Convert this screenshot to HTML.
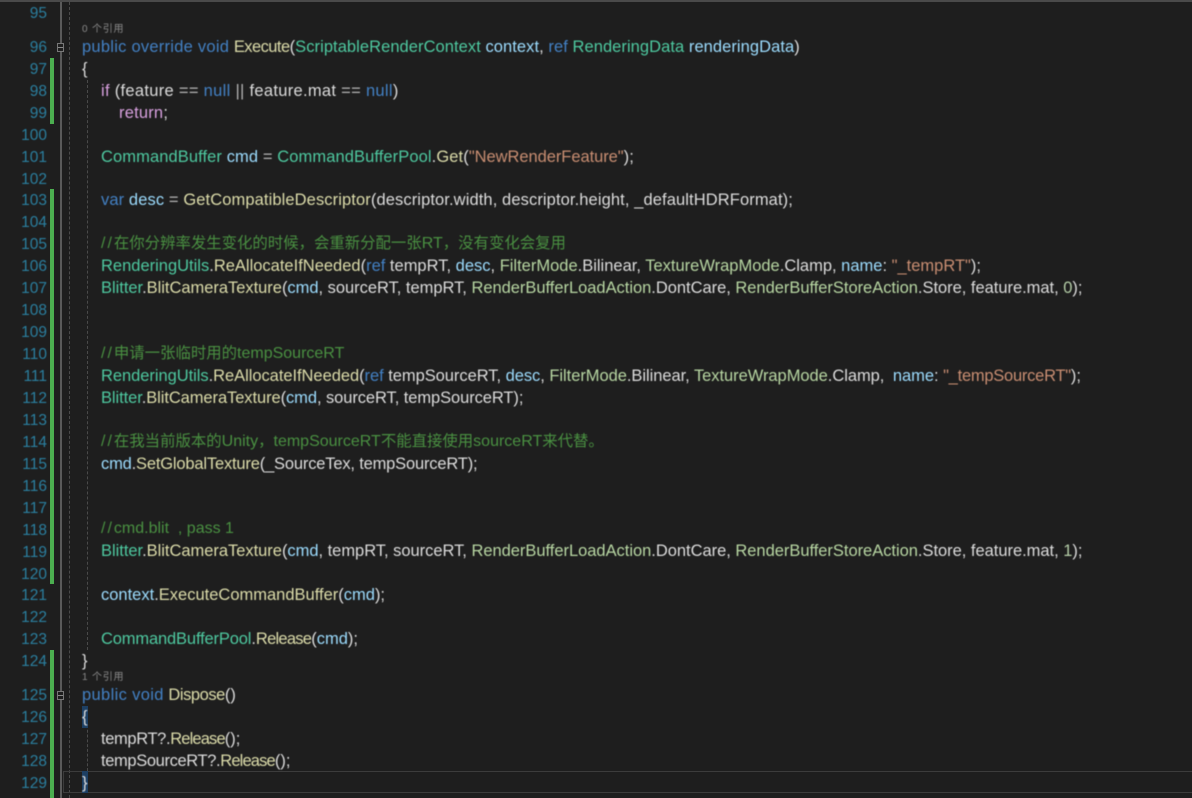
<!DOCTYPE html>
<html lang="zh">
<head>
<meta charset="utf-8">
<style>
html,body{margin:0;padding:0;background:#1e1e1e;}
#r{position:relative;width:1192px;height:798px;overflow:hidden;background:#1e1e1e;font-family:"Liberation Sans","Noto Sans CJK SC",sans-serif;font-size:16.5px;color:#dcdcdc;}
#t{position:absolute;inset:0;filter:blur(.42px);}
.l{position:absolute;white-space:pre;line-height:22px;height:22px;left:82px;}
.i{left:101px}
.n{position:absolute;left:0;width:47px;text-align:right;color:#2b7f9f;line-height:22px;height:22px;font-size:15.5px;}
.c{position:absolute;left:82px;font-size:10px;color:#8a8a8a;line-height:12px;letter-spacing:.8px;white-space:pre}
.k{color:#4381c4}.t{color:#4ec9a0}.m{color:#dcdcaa}.p{color:#9cdcfe}.g{color:#4a9142;font-size:15.4px}.s{color:#c98e72}.f{color:#d8a0df}.o{color:#b4b4b4}.d{color:#b5cea8}.e{color:#b8d7a3}
.g b{font-weight:normal;font-size:16px}
.g i{font-style:normal;font-size:16px;letter-spacing:2px}
.b{position:absolute}
</style>
</head>
<body>
<div id="r">
<div class="b" style="left:0;top:0;width:1192px;height:2px;background:#4a4a4a"></div>
<div class="b" style="left:60px;top:2px;width:2px;height:796px;background:#5a5a5a"></div>
<div class="b" style="left:69px;top:2px;height:796px;border-left:1px dashed #4a4a4a"></div>
<div class="b" style="left:87px;top:80px;height:570px;border-left:1px dashed #4a4a4a"></div>
<div class="b" style="left:87px;top:725px;height:46px;border-left:1px dashed #4a4a4a"></div>
<div class="b" style="left:50px;top:58px;width:4px;height:66px;background:#4caf50"></div>
<div class="b" style="left:50px;top:189px;width:4px;height:395px;background:#4caf50"></div>
<div class="b" style="left:50px;top:650px;width:4px;height:148px;background:#4caf50"></div>
<div class="b" style="left:57px;top:43px;width:5px;height:7px;border:1px solid #777;background:#1e1e1e"></div>
<div class="b" style="left:58px;top:47px;width:5px;height:1px;background:#888"></div>
<div class="b" style="left:57px;top:691px;width:5px;height:7px;border:1px solid #777;background:#1e1e1e"></div>
<div class="b" style="left:58px;top:695px;width:5px;height:1px;background:#888"></div>
<div class="b" style="left:63px;top:771px;width:1129px;height:20px;border:1px solid #3c3c3c;border-right:none"></div>
<div class="b" style="left:82px;top:706px;width:6px;height:22px;background:#1d3f63"></div>
<div class="b" style="left:82px;top:771px;width:6px;height:22px;background:#1d3f63"></div>
<div id="t">
<div class="n" style="top:3px">95</div>
<div class="n" style="top:37px">96</div>
<div class="n" style="top:59px">97</div>
<div class="n" style="top:81px">98</div>
<div class="n" style="top:103px">99</div>
<div class="n" style="top:125px">100</div>
<div class="n" style="top:147px">101</div>
<div class="n" style="top:169px">102</div>
<div class="n" style="top:190px">103</div>
<div class="n" style="top:212px">104</div>
<div class="n" style="top:234px">105</div>
<div class="n" style="top:256px">106</div>
<div class="n" style="top:278px">107</div>
<div class="n" style="top:300px">108</div>
<div class="n" style="top:322px">109</div>
<div class="n" style="top:344px">110</div>
<div class="n" style="top:366px">111</div>
<div class="n" style="top:388px">112</div>
<div class="n" style="top:410px">113</div>
<div class="n" style="top:432px">114</div>
<div class="n" style="top:454px">115</div>
<div class="n" style="top:476px">116</div>
<div class="n" style="top:498px">117</div>
<div class="n" style="top:520px">118</div>
<div class="n" style="top:542px">119</div>
<div class="n" style="top:564px">120</div>
<div class="n" style="top:585px">121</div>
<div class="n" style="top:607px">122</div>
<div class="n" style="top:629px">123</div>
<div class="n" style="top:651px">124</div>
<div class="n" style="top:685px">125</div>
<div class="n" style="top:707px">126</div>
<div class="n" style="top:729px">127</div>
<div class="n" style="top:751px">128</div>
<div class="n" style="top:773px">129</div>

<div class="c" style="top:24px">0 个引用</div>
<div class="l" style="top:36px;letter-spacing:.057px"><span class="k" style="letter-spacing:.25px">public override void</span> <span class="m" style="letter-spacing:-.55px">Execute</span>(<span class="t">ScriptableRenderContext</span> <span class="p">context</span>, <span class="k">ref</span> <span class="t">RenderingData</span> <span class="p">renderingData</span>)</div>
<div class="l" style="top:58px">{</div>
<div class="l i" style="top:80px;letter-spacing:.3px"><span class="f">if</span> (feature <span class="o">==</span> <span class="k">null</span> <span class="o">||</span> feature.mat <span class="o">==</span> <span class="k">null</span>)</div>
<div class="l" style="top:102px;left:119px;letter-spacing:.2px"><span class="f">return</span>;</div>
<div class="l i" style="top:146px;letter-spacing:.09px"><span class="t">CommandBuffer</span> <span class="p">cmd</span> <span class="o">=</span> <span class="t">CommandBufferPool</span>.<span class="m">Get</span>(<span class="s" style="letter-spacing:-.05px">"NewRenderFeature"</span>);</div>
<div class="l i" style="top:189px;letter-spacing:.1px"><span class="k">var</span> <span class="p">desc</span> <span class="o">=</span> <span class="m">GetCompatibleDescriptor</span>(descriptor.width, descriptor.height, _defaultHDRFormat);</div>
<div class="l i g" style="top:233px"><i>//</i>在你分辨率发生变化的时候，会重新分配一张<b>RT</b>，没有变化会复用</div>
<div class="l i" style="top:255px"><span class="t">RenderingUtils</span>.<span class="m">ReAllocateIfNeeded</span>(<span class="k">ref</span> tempRT, <span class="p">desc</span>, <span class="e">FilterMode</span>.Bilinear, <span class="e">TextureWrapMode</span>.Clamp, <span class="p">name</span>: <span class="s">"_tempRT"</span>);</div>
<div class="l i" style="top:277px;letter-spacing:-.026px"><span class="t">Blitter</span>.<span class="m">BlitCameraTexture</span>(<span class="p">cmd</span>, sourceRT, tempRT, <span class="e">RenderBufferLoadAction</span>.DontCare, <span class="e">RenderBufferStoreAction</span>.Store, feature.mat, <span class="d">0</span>);</div>
<div class="l i g" style="top:343px"><i>//</i>申请一张临时用的<b>tempSourceRT</b></div>
<div class="l i" style="top:365px;letter-spacing:-.045px"><span class="t">RenderingUtils</span>.<span class="m">ReAllocateIfNeeded</span>(<span class="k">ref</span> tempSourceRT, <span class="p">desc</span>, <span class="e">FilterMode</span>.Bilinear, <span class="e">TextureWrapMode</span>.Clamp, <span class="p" style="margin-left:4px">name</span>: <span class="s" style="letter-spacing:-.25px">"_tempSourceRT"</span>);</div>
<div class="l i" style="top:387px;letter-spacing:-.08px"><span class="t">Blitter</span>.<span class="m">BlitCameraTexture</span>(<span class="p">cmd</span>, sourceRT, tempSourceRT);</div>
<div class="l i g" style="top:431px"><i>//</i>在我当前版本的<b>Unity</b>，<b>tempSourceRT</b>不能直接使用<b>sourceRT</b>来代替。</div>
<div class="l i" style="top:453px;letter-spacing:-.18px"><span class="p">cmd</span>.<span class="m">SetGlobalTexture</span>(_SourceTex, tempSourceRT);</div>
<div class="l i g" style="top:518px;font-size:16px"><i>//</i>cmd.blit  , pass 1</div>
<div class="l i" style="top:540px;letter-spacing:-.026px"><span class="t">Blitter</span>.<span class="m">BlitCameraTexture</span>(<span class="p">cmd</span>, tempRT, sourceRT, <span class="e">RenderBufferLoadAction</span>.DontCare, <span class="e">RenderBufferStoreAction</span>.Store, feature.mat, <span class="d">1</span>);</div>
<div class="l i" style="top:584px"><span class="p">context</span>.<span class="m">ExecuteCommandBuffer</span>(<span class="p">cmd</span>);</div>
<div class="l i" style="top:628px"><span class="t" style="letter-spacing:-.15px">CommandBufferPool</span>.<span class="m" style="letter-spacing:-.75px">Release</span>(<span class="p">cmd</span>);</div>
<div class="l" style="top:650px">}</div>
<div class="c" style="top:672px">1 个引用</div>
<div class="l" style="top:684px"><span class="k" style="letter-spacing:.35px">public void</span> <span class="m" style="letter-spacing:-.45px">Dispose</span>()</div>
<div class="l" style="top:706px">{</div>
<div class="l i" style="top:728px"><span style="letter-spacing:-.37px">tempRT?.</span><span class="m" style="letter-spacing:-.85px">Release</span>();</div>
<div class="l i" style="top:750px"><span style="letter-spacing:-.37px">tempSourceRT?.</span><span class="m" style="letter-spacing:-.85px">Release</span>();</div>
<div class="l" style="top:772px">}</div>
</div>
</div>
</body>
</html>
